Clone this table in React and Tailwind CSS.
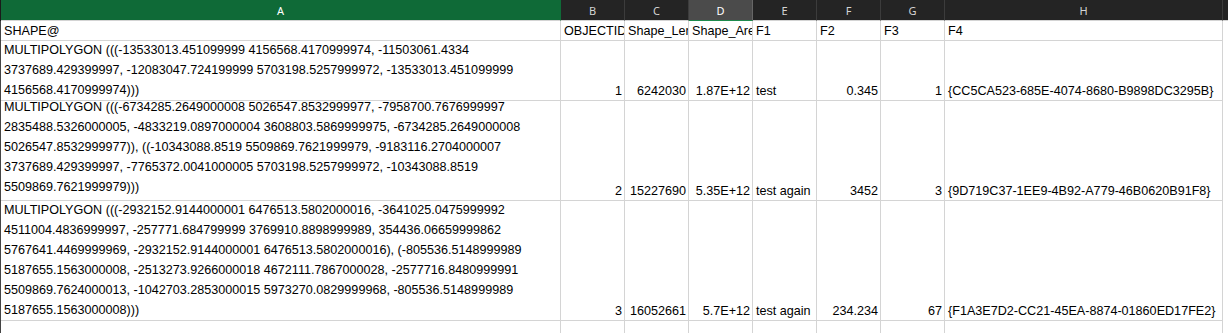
import React from 'react';

// Column layout of the sheet (widths include the right gridline)
const COLUMNS = [
  { id: 'A', width: 'w-[560px]' },
  { id: 'B', width: 'w-[64px]' },
  { id: 'C', width: 'w-[64px]' },
  { id: 'D', width: 'w-[64px]' },
  { id: 'E', width: 'w-[64px]' },
  { id: 'F', width: 'w-[64px]' },
  { id: 'G', width: 'w-[64px]' },
  { id: 'H', width: 'w-[278px]' },
];

const ROWS = [
  {
    height: 'h-[60px]',
    pad: 'pb-0',
    shape: [
      'MULTIPOLYGON (((-13533013.451099999 4156568.4170999974, -11503061.4334',
      '3737689.429399997, -12083047.724199999 5703198.5257999972, -13533013.451099999',
      '4156568.4170999974)))',
    ],
    values: ['1', '6242030', '1.87E+12', 'test', '0.345', '1', '{CC5CA523-685E-4074-8680-B9898DC3295B}'],
  },
  {
    height: 'h-[100px]',
    pad: 'pb-[3px]',
    shape: [
      'MULTIPOLYGON (((-6734285.2649000008 5026547.8532999977, -7958700.7676999997',
      '2835488.5326000005, -4833219.0897000004 3608803.5869999975, -6734285.2649000008',
      '5026547.8532999977)), ((-10343088.8519 5509869.7621999979, -9183116.2704000007',
      '3737689.429399997, -7765372.0041000005 5703198.5257999972, -10343088.8519',
      '5509869.7621999979)))',
    ],
    values: ['2', '15227690', '5.35E+12', 'test again', '3452', '3', '{9D719C37-1EE9-4B92-A779-46B0620B91F8}'],
  },
  {
    height: 'h-[120px]',
    pad: 'pb-0',
    shape: [
      'MULTIPOLYGON (((-2932152.9144000001 6476513.5802000016, -3641025.0475999992',
      '4511004.4836999997, -257771.684799999 3769910.8898999989, 354436.06659999862',
      '5767641.4469999969, -2932152.9144000001 6476513.5802000016), (-805536.5148999989',
      '5187655.1563000008, -2513273.9266000018 4672111.7867000028, -2577716.8480999991',
      '5509869.7624000013, -1042703.2853000015 5973270.0829999968, -805536.5148999989',
      '5187655.1563000008)))',
    ],
    values: ['3', '16052661', '5.7E+12', 'test again', '234.234', '67', '{F1A3E7D2-CC21-45EA-8874-01860ED17FE2}'],
  },
];

const HEADERS = ['SHAPE@', 'OBJECTID', 'Shape_Length', 'Shape_Area', 'F1', 'F2', 'F3', 'F4'];

// which value columns are right aligned (numbers)
const NUMERIC = [true, true, true, false, true, true, false];

const ColumnHeader = ({ id, width }) => {
  let tone = 'bg-[#242424] text-[#d4d4d4] border-r-[#3c3c3c] border-b-[#d4d4d4]';
  if (id === 'A') tone = 'bg-[#0f6a37] text-white border-r-[#0f6a37] border-b-[#d4d4d4]';
  if (id === 'D') tone = 'bg-[#4b4b4b] text-white border-r-[#666666] border-b-[#1d8a4c]';

  return (
    <div className={`${width} h-[21px] shrink-0 border-r border-b flex items-center justify-center pt-[2px] text-[11px] font-['Noto_Sans'] ${tone}`}>
      {id}
    </div>
  );
};

const Cell = ({ width, height, right, children }) => (
  <div
    className={`${width} ${height} shrink-0 border-r border-b border-[#d4d4d4] overflow-hidden flex items-end ${right ? 'justify-end pr-[2px]' : 'pl-[3px]'}`}
  >
    <span className="whitespace-nowrap leading-[18px]">{children}</span>
  </div>
);

export default function App() {
  return (
    <div className="w-[1228px] h-[333px] overflow-hidden bg-white text-black text-[12.6px] font-['Liberation_Sans',Arial,sans-serif]">
      {/* Column letters */}
      <div className="flex bg-[#242424] border-l border-[#1a1a1a]">
        {COLUMNS.map((col) => (
          <ColumnHeader key={col.id} id={col.id} width={col.width} />
        ))}
        <div className="flex-1 h-[21px] border-b border-[#d4d4d4]"></div>
      </div>

      <div className="border-l border-[#444444]">
        {/* Field names */}
        <div className="flex">
          {COLUMNS.map((col, i) => (
            <Cell key={col.id} width={col.width} height="h-[20px]">
              {HEADERS[i]}
            </Cell>
          ))}
        </div>

        {/* Records */}
        {ROWS.map((row, r) => (
          <div key={r} className="flex">
            <div className={`${COLUMNS[0].width} ${row.height} ${row.pad} shrink-0 border-r border-b border-[#d4d4d4] overflow-hidden flex flex-col justify-end pl-[3px]`}>
              {row.shape.map((line, j) => (
                <div key={j} className="whitespace-pre leading-[20px] shrink-0">
                  {line}
                </div>
              ))}
            </div>
            {row.values.map((val, i) => (
              <Cell key={i} width={COLUMNS[i + 1].width} height={row.height} right={NUMERIC[i]}>
                {val}
              </Cell>
            ))}
          </div>
        ))}

        {/* Empty next row */}
        <div className="flex">
          {COLUMNS.map((col) => (
            <div key={col.id} className={`${col.width} h-[20px] shrink-0 border-r border-[#d4d4d4]`}></div>
          ))}
        </div>
      </div>
    </div>
  );
}
